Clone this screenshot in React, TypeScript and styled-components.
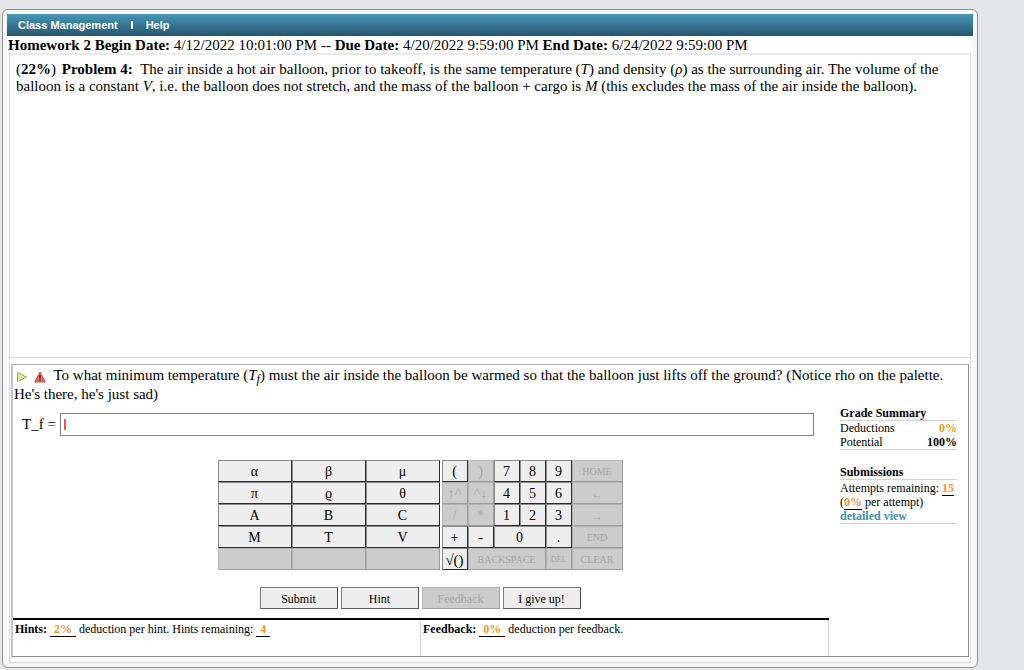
import React from "react";
import styled, { createGlobalStyle } from "styled-components";

const GlobalStyle = createGlobalStyle`
  *, *::before, *::after { box-sizing: border-box; }
  body {
    margin: 0;
    background: #e5e6e8;
    color: #000;
    font-family: "Liberation Serif", "Times New Roman", serif;
    font-size: 15px;
  }
`;

const Page = styled.div`
  padding: 9px 46px 2px 2px;
`;

const Frame = styled.div`
  border: 1px solid #8f8f8f;
  border-radius: 6px;
  background: #f7f7f7;
  padding: 4px;
`;

const MenuBar = styled.nav`
  display: flex;
  align-items: center;
  gap: 13px;
  height: 22px;
  padding: 0 11px;
  background: linear-gradient(#4797b9, #26566e);
  color: #fff;
  font: bold 11px "Liberation Sans", Arial, sans-serif;
`;

const MenuLink = styled.a`
  color: #fff;
  text-decoration: none;
`;

const MenuDivider = styled.span`
  width: 2px;
  height: 8px;
  background: #fff;
`;

const Content = styled.main`
  background: #fff;
  padding: 0 2px;
`;

const Dates = styled.p`
  margin: 0 -1px;
  height: 17px;
  line-height: 18px;
`;

const Sheet = styled.div`
  border: 1px solid #d8d8d8;
  border-top: 2px solid #ebebeb;
`;

const Problem = styled.section`
  min-height: 303px;
  padding: 6px 6px 0;
  border-bottom: 1px solid #d8d8d8;
  line-height: 17px;

  p { margin: 0; }
`;

const Lead = styled.span`
  margin-right: 4px;
`;

const LeadTitle = styled.b`
  margin-left: 2px;
`;

const Part = styled.section`
  margin: 6px 1px 5px;
  border: 1px solid #8e8e8e;
  border-top-color: #a8a8a8;
  border-left: 2px solid #c4c4c4;
`;

const Question = styled.p`
  margin: 0;
  padding: 1px 0 1px 1px;
  line-height: 19px;
`;

const QuestionIcon = styled.svg<{ $gap: number }>`
  margin: 0 ${(p) => p.$gap}px 0 2px;
  vertical-align: -3px;
`;

const Subscript = styled.i`
  font-size: 12px;
  vertical-align: -3px;
  line-height: 0;
`;

const Columns = styled.div`
  display: flex;
  align-items: stretch;
`;

const Work = styled.div`
  flex: 1;
  min-width: 0;
`;

const AnswerRow = styled.div`
  display: flex;
  align-items: center;
  gap: 4px;
  padding: 8px 15px 0 9px;
`;

const AnswerBox = styled.div`
  display: flex;
  flex: 1;
  align-items: center;
  height: 23px;
  padding: 0 3px;
  border: 1px solid #808080;
`;

const Caret = styled.span`
  width: 2px;
  height: 11px;
  background: #f4564e;
`;

const AnswerInput = styled.input`
  flex: 1;
  min-width: 0;
  height: 19px;
  padding: 0;
  border: 0;
  outline: 0;
  background: transparent;
  font: inherit;
`;

const Palette = styled.div`
  display: flex;
  justify-content: center;
  gap: 2px;
  margin: 24px 2px 0 0;
`;

const Symbols = styled.div`
  display: grid;
  grid-template-columns: repeat(3, 74px);
  grid-auto-rows: 22px;
`;

const Keypad = styled.div`
  display: grid;
  grid-template-columns: repeat(5, 26px) 51px;
  grid-auto-rows: 22px;
`;

const Key = styled.button<{ $size?: number; $span?: number }>`
  grid-column: span ${(p) => p.$span ?? 1};
  min-width: 0;
  padding: 2px 0 0;
  border: 1px solid;
  border-color: #8c8c8c #2c2c2c #2c2c2c #8c8c8c;
  border-radius: 0;
  background: #eee;
  color: #000;
  font-family: inherit;
  font-size: ${(p) => p.$size ?? 14}px;
  line-height: 18px;
  white-space: nowrap;

  &:disabled {
    border-color: #b4b4b4 #9c9c9c #9c9c9c #b4b4b4;
    background: #ccc;
    color: #a6a6a6;
  }
`;

const Actions = styled.div`
  display: flex;
  justify-content: center;
  gap: 3px;
  margin: 17px 2px 9px 0;
`;

const ActionButton = styled(Key)`
  width: 78px;
  height: 22px;
  border-color: #7c7c7c #4c4c4c #5c5c5c #7c7c7c;
  font-size: 12px;
`;

const Penalties = styled.div`
  display: grid;
  grid-template-columns: 1fr 1fr;
  border-top: 2px solid #000;
  font-size: 12px;
  line-height: 18px;
`;

const Penalty = styled.div`
  height: 36px;
  padding-left: 2px;
  border-right: 1px solid #d2d2d2;
`;

const Amount = styled.b<{ $pad?: number }>`
  padding: 0 ${(p) => p.$pad ?? 0}px;
  border-bottom: 1px solid #000;
  color: #f0962e;
`;

const Side = styled.aside`
  flex: 0 0 139px;
  padding: 1px 11px 0 11px;
  font-size: 12px;
  line-height: 14px;
`;

const SideTitle = styled.h2`
  margin: 0;
  border-bottom: 1px solid #d2d2d2;
  font-size: 12px;
  line-height: 14px;
`;

const Grades = styled.table`
  width: 100%;
  margin-bottom: 15px;
  border-bottom: 1px solid #d2d2d2;
  border-spacing: 0;

  th, td { padding: 0; font-weight: normal; text-align: left; line-height: 14px; }
  td { text-align: right; font-weight: bold; }
`;

const Deduction = styled.span`
  color: #f0962e;
`;

const Attempts = styled.div`
  padding-top: 1px;
  border-bottom: 1px solid #d2d2d2;
  white-space: nowrap;
`;

const DetailLink = styled.a`
  display: block;
  color: #3f90b3;
  font-weight: bold;
  text-decoration: none;
`;

type KeyDef = { label: string; off?: boolean; span?: number; size?: number };

const symbols: KeyDef[] = [
  { label: "α" }, { label: "β" }, { label: "μ" },
  { label: "π" }, { label: "ϱ" }, { label: "θ" },
  { label: "A" }, { label: "B" }, { label: "C" },
  { label: "M" }, { label: "T" }, { label: "V" },
  { label: "", off: true }, { label: "", off: true }, { label: "", off: true },
];

const keypad: KeyDef[] = [
  { label: "(" }, { label: ")", off: true }, { label: "7" }, { label: "8" }, { label: "9" },
  { label: "HOME", off: true, size: 10 },
  { label: "↑^", off: true }, { label: "^↓", off: true }, { label: "4" }, { label: "5" }, { label: "6" },
  { label: "←", off: true, size: 12 },
  { label: "/", off: true }, { label: "*", off: true }, { label: "1" }, { label: "2" }, { label: "3" },
  { label: "→", off: true, size: 12 },
  { label: "+" }, { label: "-" }, { label: "0", span: 2 }, { label: "." },
  { label: "END", off: true, size: 10 },
  { label: "√()", size: 15 }, { label: "BACKSPACE", off: true, span: 3, size: 10 },
  { label: "DEL", off: true, size: 8 }, { label: "CLEAR", off: true, size: 10 },
];

const renderKey = (k: KeyDef, i: number) => (
  <Key key={i} type="button" disabled={k.off} $span={k.span} $size={k.size}>
    {k.label}
  </Key>
);

export default function App() {
  return (
    <Page>
      <GlobalStyle />
      <Frame>
        <MenuBar>
          <MenuLink href="#class">Class Management</MenuLink>
          <MenuDivider />
          <MenuLink href="#help">Help</MenuLink>
        </MenuBar>
        <Content>
          <Dates>
            <b>Homework 2 Begin Date:</b> 4/12/2022 10:01:00 PM -- <b>Due Date:</b> 4/20/2022
            9:59:00 PM <b>End Date:</b> 6/24/2022 9:59:00 PM
          </Dates>
          <Sheet>
            <Problem>
              <p>
                <Lead>
                  (<b>22%</b>) <LeadTitle>Problem 4:</LeadTitle>
                </Lead>{" "}
                The air inside a hot air balloon, prior to takeoff, is the same temperature (
                <i>T</i>) and density (<i>ρ</i>) as the surrounding air. The volume of the
                <br />
                balloon is a constant <i>V</i>, i.e. the balloon does not stretch, and the mass of
                the balloon + cargo is <i>M</i> (this excludes the mass of the air inside the
                balloon).
              </p>
            </Problem>
            <Part>
              <Question>
                <QuestionIcon $gap={4} width="12" height="12" viewBox="0 0 12 12" aria-hidden="true">
                  <path d="M1.5 1.5 10.5 6 1.5 10.5Z" fill="#d3e8a4" stroke="#8fb052" strokeLinejoin="round" />
                </QuestionIcon>
                <QuestionIcon $gap={4} width="12" height="12" viewBox="0 0 12 12" aria-hidden="true">
                  <path d="M6 1 11.3 11H.7Z" fill="#e06c6a" stroke="#c4524f" strokeLinejoin="round" />
                  <path d="M6 4.3v3.2M6 8.5v1.2" stroke="#5a2020" strokeWidth="1.6" />
                </QuestionIcon>{" "}
                To what minimum temperature (<i>T</i>
                <Subscript>f</Subscript>) must the air inside the balloon be warmed so that the
                balloon just lifts off the ground? (Notice rho on the palette.
                <br />
                He's there, he's just sad)
              </Question>
              <Columns>
                <Work>
                  <AnswerRow>
                    <label htmlFor="answer">T_f =</label>
                    <AnswerBox>
                      <Caret />
                      <AnswerInput id="answer" type="text" />
                    </AnswerBox>
                  </AnswerRow>
                  <Palette>
                    <Symbols>{symbols.map(renderKey)}</Symbols>
                    <Keypad>{keypad.map(renderKey)}</Keypad>
                  </Palette>
                  <Actions>
                    <ActionButton type="button">Submit</ActionButton>
                    <ActionButton type="button">Hint</ActionButton>
                    <ActionButton type="button" disabled>Feedback</ActionButton>
                    <ActionButton type="button">I give up!</ActionButton>
                  </Actions>
                  <Penalties>
                    <Penalty>
                      <b>Hints:</b> <Amount $pad={4}>2%</Amount> deduction per hint. Hints
                      remaining: <Amount $pad={4}>4</Amount>
                    </Penalty>
                    <Penalty>
                      <b>Feedback:</b> <Amount $pad={4}>0%</Amount> deduction per feedback.
                    </Penalty>
                  </Penalties>
                </Work>
                <Side>
                  <SideTitle>Grade Summary</SideTitle>
                  <Grades>
                    <tbody>
                      <tr>
                        <th scope="row">Deductions</th>
                        <td><Deduction>0%</Deduction></td>
                      </tr>
                      <tr>
                        <th scope="row">Potential</th>
                        <td>100%</td>
                      </tr>
                    </tbody>
                  </Grades>
                  <SideTitle>Submissions</SideTitle>
                  <Attempts>
                    Attempts remaining: <Amount>15</Amount>
                    <br />(<Amount>0%</Amount> per attempt)
                    <DetailLink href="#detail">detailed view</DetailLink>
                  </Attempts>
                </Side>
              </Columns>
            </Part>
          </Sheet>
        </Content>
      </Frame>
    </Page>
  );
}
